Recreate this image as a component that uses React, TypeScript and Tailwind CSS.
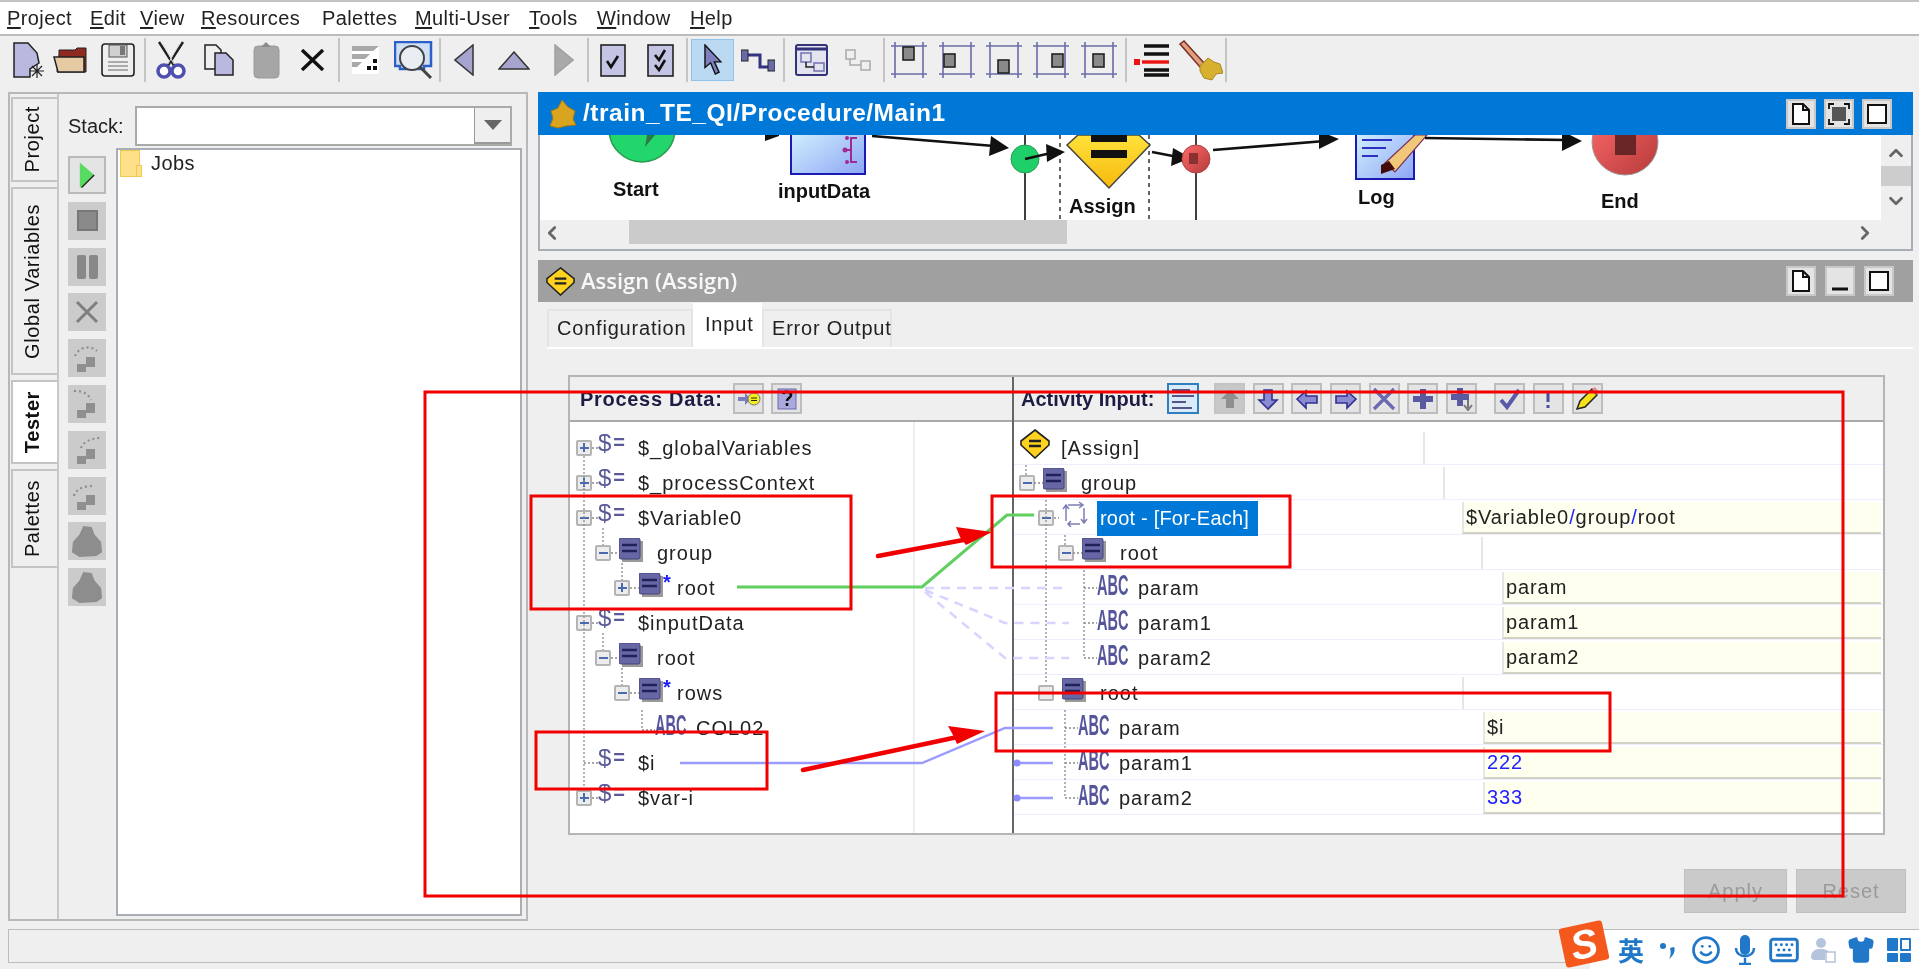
import type { ReactNode } from "react";
import { ChevronDown, ChevronLeft, ChevronRight, ChevronUp, Keyboard, Shirt, Smile } from "lucide-react";

const menus = [
  { hot: "P", rest: "roject", cls: "w-[83px]" },
  { hot: "E", rest: "dit", cls: "w-[50px]" },
  { hot: "V", rest: "iew", cls: "w-[61px]" },
  { hot: "R", rest: "esources", cls: "w-[121px]" },
  { hot: "", rest: "Palettes", cls: "w-[93px]" },
  { hot: "M", rest: "ulti-User", cls: "w-[114px]" },
  { hot: "T", rest: "ools", cls: "w-[68px]" },
  { hot: "W", rest: "indow", cls: "w-[93px]" },
  { hot: "H", rest: "elp", cls: "w-[50px]" },
];

const Sep = ({ cls }: { cls: string }) => <div className={`h-[44px] w-[2px] bg-[#c4c4c4] ${cls}`} />;

const AlignIcon = ({ x, y, cls }: { x: number; y: number; cls: string }) => (
  <svg viewBox="0 0 36 36" className={`h-[36px] w-[36px] ${cls}`}>
    <path d="M0 4h36M0 32h36M4 0v36M32 0v36" stroke="#6c6ca8" strokeWidth="1.6" fill="none" />
    <rect x={x} y={y} width="11" height="13" fill="#8a8a8a" stroke="#222" strokeWidth="1.6" />
  </svg>
);

const Toolbar = () => (
  <div className="flex h-[57px] items-center pb-[9px]">
    <svg viewBox="0 0 33 37" className="ml-[12px] h-[37px] w-[33px]">
      <path d="M2 1h14l9 10 2 10-9 6v8H2z" fill="#b9b9e0" stroke="#222" strokeWidth="1.5" />
      <path d="M25 22v14M18 29h14M20 24l10 10M30 24L20 34" stroke="#222" strokeWidth="1.2" />
    </svg>
    <svg viewBox="0 0 35 26" className="ml-[8px] h-[26px] w-[35px]">
      <path d="M6 7V3h16l2-2h9v24H4z" fill="#8f2a20" stroke="#222" strokeWidth="1" />
      <path d="M1 10h30v15H5z" fill="#e6caa4" stroke="#222" strokeWidth="1.5" />
    </svg>
    <svg viewBox="0 0 34 34" className="ml-[13px] h-[34px] w-[34px]">
      <rect x="1" y="1" width="32" height="32" rx="3" fill="#efefef" stroke="#222" strokeWidth="1.6" />
      <rect x="8" y="2" width="18" height="12" fill="#d0d0d0" stroke="#555" />
      <rect x="19" y="3" width="5" height="9" fill="#777" />
      <path d="M7 19h20M7 23h20M7 27h20" stroke="#666" />
    </svg>
    <Sep cls="ml-[9px]" />
    <svg viewBox="0 0 30 38" className="ml-[10px] h-[38px] w-[30px]">
      <path d="M3 1l16 25M27 1L11 26" stroke="#222" strokeWidth="2.4" />
      <path d="M7 3l11 20M23 3L12 23" stroke="#ddd" strokeWidth="1" />
      <circle cx="8" cy="30" r="6" fill="#fff" stroke="#4f4fb0" strokeWidth="3.5" />
      <circle cx="22" cy="30" r="6" fill="#fff" stroke="#4f4fb0" strokeWidth="3.5" />
    </svg>
    <svg viewBox="0 0 31 32" className="ml-[18px] h-[32px] w-[31px]">
      <path d="M1 1h11l5 5v19H1z" fill="#efefef" stroke="#222" strokeWidth="1.5" />
      <path d="M11 9h11l7 7v15H11z" fill="#b9b9e0" stroke="#222" strokeWidth="1.5" />
    </svg>
    <svg viewBox="0 0 27 38" className="ml-[18px] h-[38px] w-[27px]">
      <rect x="1" y="5" width="25" height="32" rx="4" fill="#a6a6a6" stroke="#9a9a9a" />
      <path d="M8 6l5-5 5 5z" fill="#8a8a8a" />
    </svg>
    <svg viewBox="0 0 25 22" className="ml-[20px] h-[22px] w-[25px]">
      <path d="M2 1l21 20M23 1L2 21" stroke="#111" strokeWidth="3.4" />
    </svg>
    <Sep cls="ml-[13px]" />
    <svg viewBox="0 0 27 28" className="ml-[12px] h-[28px] w-[27px]">
      <rect width="27" height="28" fill="#fff" />
      <path d="M0 0h27l-6 5H0zM0 8h18l-5 5H0zM0 16h10l-5 5H0z" fill="#a8a8a8" />
      <path d="M15 20h4v4h-4zM21 20h4v4h-4zM21 13h4v4h-4z" fill="#111" />
    </svg>
    <svg viewBox="0 0 39 38" className="ml-[15px] h-[38px] w-[39px]">
      <path d="M1 1h36v24H30v3H6v-3H1z" fill="#cfe0f4" stroke="#2c60c8" strokeWidth="2.5" />
      <circle cx="18" cy="17" r="12" fill="#e8eef2" stroke="#444" strokeWidth="2" />
      <path d="M26 26l11 11" stroke="#444" strokeWidth="3" />
    </svg>
    <Sep cls="ml-[6px]" />
    <svg viewBox="0 0 20 32" className="ml-[13px] h-[32px] w-[20px]"><path d="M19 1v30L1 16z" fill="#a7a4cf" stroke="#333" strokeWidth="1.5" /></svg>
    <svg viewBox="0 0 32 19" className="ml-[24px] h-[19px] w-[32px]"><path d="M16 1l15 17H1z" fill="#a7a4cf" stroke="#333" strokeWidth="1.5" /></svg>
    <svg viewBox="0 0 20 32" className="ml-[24px] h-[32px] w-[20px]"><path d="M1 1v30l18-15z" fill="#a9a9a9" stroke="#a0a0a0" strokeWidth="1.5" /></svg>
    <Sep cls="ml-[13px]" />
    <svg viewBox="0 0 26 33" className="ml-[11px] h-[33px] w-[26px]">
      <rect x="1" y="1" width="24" height="31" fill="#c4c4e4" stroke="#222" strokeWidth="1.6" />
      <path d="M7 17l4 6 7-11" stroke="#111" strokeWidth="2.6" fill="none" />
    </svg>
    <svg viewBox="0 0 27 33" className="ml-[21px] h-[33px] w-[27px]">
      <rect x="1" y="1" width="25" height="31" fill="#c4c4e4" stroke="#222" strokeWidth="1.6" />
      <path d="M8 11l4 5 6-10M8 21l4 5 6-10" stroke="#111" strokeWidth="2.6" fill="none" />
    </svg>
    <Sep cls="ml-[12px]" />
    <div className="ml-[3px] flex h-[42px] w-[43px] items-center justify-center border border-[#8fc4ef] bg-[#bcd9f2]">
      <svg viewBox="0 0 20 34" className="h-[32px] w-[19px]"><path d="M2 1v24l6-5 5 12 4-2-5-11h7z" fill="#7f7fc0" stroke="#111" strokeWidth="1.5" /></svg>
    </div>
    <svg viewBox="0 0 34 23" className="ml-[7px] h-[23px] w-[34px]">
      <path d="M6 6h13v12h9" stroke="#333380" strokeWidth="3" fill="none" />
      <rect x="0" y="1" width="7" height="11" fill="#6a6aa8" stroke="#222" />
      <rect x="27" y="11" width="7" height="11" fill="#6a6aa8" stroke="#222" />
    </svg>
    <Sep cls="ml-[8px]" />
    <svg viewBox="0 0 33 32" className="ml-[10px] h-[32px] w-[33px]">
      <rect x="1" y="1" width="31" height="30" rx="2" fill="#e4e4f0" stroke="#33337a" strokeWidth="2" />
      <path d="M1 5h31" stroke="#33337a" strokeWidth="3" />
      <rect x="6" y="9" width="10" height="9" fill="none" stroke="#7070b0" strokeWidth="1.5" />
      <rect x="19" y="19" width="10" height="8" fill="none" stroke="#7070b0" strokeWidth="1.5" />
      <path d="M11 18v5h8" stroke="#222" strokeWidth="1.5" fill="none" />
    </svg>
    <svg viewBox="0 0 26 22" className="ml-[17px] h-[22px] w-[26px]">
      <rect x="1" y="1" width="9" height="9" fill="none" stroke="#aaa" strokeWidth="1.5" />
      <rect x="16" y="12" width="9" height="9" fill="none" stroke="#aaa" strokeWidth="1.5" />
      <path d="M5 10v6h11" stroke="#aaa" strokeWidth="1.5" fill="none" />
    </svg>
    <Sep cls="ml-[12px]" />
    <AlignIcon x={12} y={5} cls="ml-[6px]" />
    <AlignIcon x={5} y={12} cls="ml-[12px]" />
    <AlignIcon x={12} y={18} cls="ml-[11px]" />
    <AlignIcon x={19} y={12} cls="ml-[11px]" />
    <AlignIcon x={12} y={12} cls="ml-[12px]" />
    <Sep cls="ml-[8px]" />
    <svg viewBox="0 0 35 33" className="ml-[7px] h-[33px] w-[35px]">
      <path d="M10 2h25M10 10h25M10 26h25M10 31h25" stroke="#111" strokeWidth="3.4" />
      <path d="M8 18h27" stroke="#ee1111" strokeWidth="3.4" />
      <rect x="0" y="15" width="6" height="6" fill="#ee1111" />
    </svg>
    <svg viewBox="0 0 45 41" className="ml-[9px] h-[41px] w-[45px]">
      <path d="M2 4l4-3 20 22-4 4z" fill="#e0a080" stroke="#7a3020" strokeWidth="1.5" />
      <path d="M22 26l8-8 6 4 6 2 3 9-7 1-4 6-8-2-4-7z" fill="#d8b030" stroke="#a88820" />
    </svg>
    <Sep cls="ml-[2px]" />
  </div>
);

const ToolButton = ({ on, children }: { on?: boolean; children: ReactNode }) => (
  <div className={`flex h-[38px] w-[38px] items-center justify-center ${on ? "border-2 border-[#b9b9b9] bg-[#e4e4e4]" : "bg-[#cbcbcb]"}`}>
    {children}
  </div>
);

const Step = ({ d }: { d: string }) => (
  <svg viewBox="0 0 32 32" className="h-[32px] w-[32px]">
    <path d="M6 22h9v-7h9v10h-9v5H6z" fill="#8f8f8f" />
    <path d={d} fill="none" stroke="#8a8a8a" strokeWidth="2" strokeDasharray="2 3" />
  </svg>
);

const Blob = () => (
  <svg viewBox="0 0 34 36" className="h-[34px] w-[32px]">
    <path d="M13 2l9 1 3 8 7 8 1 11-6 4-18 1-8-5 1-11 7-8z" fill="#8d8d8d" />
  </svg>
);

const LeftPanel = () => (
  <aside className="flex h-[829px] w-[520px] border-2 border-[#b8b8b8]">
    <div className="flex w-[47px] flex-col gap-[5px] pl-[1px] pt-[3px] text-[20px] text-[#111]">
      {[
        { t: "Project", c: "h-[85px]" },
        { t: "Global Variables", c: "h-[188px]" },
        { t: "Tester", c: "h-[84px] bg-white font-bold" },
        { t: "Palettes", c: "h-[99px]" },
      ].map((tab) => (
        <div key={tab.t} className={`flex w-[46px] items-center justify-center border-2 border-r-0 border-[#c4c4c4] pr-[7px] ${tab.c}`}>
          <span className="rotate-180 [writing-mode:vertical-rl] tracking-[0.6px]">{tab.t}</span>
        </div>
      ))}
    </div>
    <div className="flex flex-1 flex-col border-l-2 border-[#c8c8c8] pt-[12px]">
      <div className="flex h-[40px] items-center">
        <span className="ml-[9px] w-[67px] text-[20px] text-[#222]">Stack:</span>
        <div className="flex h-[40px] w-[377px] justify-end border-2 border-[#aaa] bg-white">
          <div className="flex w-[36px] items-center justify-center border-b-2 border-l border-[#999] bg-[#efefef]">
            <div className="h-0 w-0 border-x-[9px] border-t-[10px] border-x-transparent border-t-[#666]" />
          </div>
        </div>
      </div>
      <div className="mt-[2px] flex flex-1">
        <div className="flex w-[57px] flex-col gap-[7.8px] pl-[9px] pt-[8px]">
          <ToolButton on>
            <svg viewBox="0 0 20 30" className="h-[28px] w-[18px]"><path d="M2 1l16 14L4 29H2z" fill="#59db62" /><path d="M4 29l14-14" stroke="#222" strokeWidth="1.5" /></svg>
          </ToolButton>
          <ToolButton><div className="h-[21px] w-[21px] border-2 border-[#777] bg-[#8a8a8a]" /></ToolButton>
          <ToolButton>
            <div className="flex gap-[3px]"><div className="h-[24px] w-[9px] rounded-[2px] bg-[#888]" /><div className="h-[24px] w-[9px] rounded-[2px] bg-[#888]" /></div>
          </ToolButton>
          <ToolButton><svg viewBox="0 0 24 24" className="h-[24px] w-[24px]"><path d="M2 2l20 20M22 2L2 22" stroke="#7f7f7f" strokeWidth="3" /></svg></ToolButton>
          <ToolButton><Step d="M4 14C7 6 18 2 26 9" /></ToolButton>
          <ToolButton><Step d="M3 3c8 0 14 2 17 9" /></ToolButton>
          <ToolButton><Step d="M10 14C12 8 20 4 30 4" /></ToolButton>
          <ToolButton><Step d="M3 16C5 8 14 6 24 6" /></ToolButton>
          <ToolButton><Blob /></ToolButton>
          <ToolButton><Blob /></ToolButton>
        </div>
        <div className="mb-[2px] h-[768px] w-[406px] border-2 border-[#a9adb5] bg-white">
          <div className="flex h-[30px] items-start pl-[2px]">
            <div className="relative h-[27px] w-[20px] border border-[#f0c850] bg-[#ffe08a]">
              <div className="absolute -right-[3px] bottom-[-1px] h-[12px] w-[6px] border border-[#f0c850] bg-[#ffe08a]" />
            </div>
            <span className="-mt-[2px] ml-[11px] text-[20px] tracking-[0.4px] text-[#222]">Jobs</span>
          </div>
        </div>
      </div>
    </div>
  </aside>
);

const WinButton = ({ kind }: { kind: "doc" | "full" | "max" | "min" }) => (
  <div className="flex h-[30px] w-[30px] items-center justify-center border-2 border-[#c8c8c8] bg-[#e4e4e4]">
    <svg viewBox="0 0 22 22" className="h-[22px] w-[22px]">
      {kind === "doc" && <path d="M3 1h10l6 6v14H3zM13 1v6h6" fill="#fff" stroke="#111" strokeWidth="2" />}
      {kind === "full" && (
        <>
          <rect x="4" y="4" width="14" height="14" fill="#555" />
          <path d="M1 6V1h5M16 1h5v5M21 16v5h-5M6 21H1v-5" fill="none" stroke="#111" strokeWidth="1.8" />
        </>
      )}
      {kind === "max" && <rect x="2" y="2" width="18" height="18" fill="#fff" stroke="#111" strokeWidth="2" />}
      {kind === "min" && <path d="M3 19h16" stroke="#111" strokeWidth="3" />}
    </svg>
  </div>
);

const Diamond = ({ cls }: { cls: string }) => (
  <svg viewBox="0 0 30 30" className={cls}>
    <path d="M15 1l14 11v4L15 29 1 16v-4z" fill="#ffd21f" stroke="#222" strokeWidth="1.6" />
    <path d="M9 12h12M9 17h12" stroke="#222" strokeWidth="2.4" />
  </svg>
);

const Diagram = () => (
  <div className="relative h-[85px] flex-1 overflow-hidden bg-white">
    <svg viewBox="541 135 1341 85" className="absolute inset-0 h-[85px] w-[1341px]">
      <defs>
        <linearGradient id="boxFill" x1="0" y1="0" x2="1" y2="1">
          <stop offset="0" stopColor="#d6f6ff" />
          <stop offset="1" stopColor="#8ea6f4" />
        </linearGradient>
        <linearGradient id="goldFill" x1="0" y1="0" x2="0" y2="1">
          <stop offset="0" stopColor="#ffe23a" />
          <stop offset="1" stopColor="#f6b90e" />
        </linearGradient>
        <linearGradient id="redFill" x1="0" y1="0" x2="1" y2="1">
          <stop offset="0" stopColor="#ff6a6a" />
          <stop offset="1" stopColor="#b53a3a" />
        </linearGradient>
      </defs>
      <circle cx="643" cy="129" r="33" fill="#22d66c" stroke="#2a9a50" strokeWidth="1.5" />
      <path d="M648 135l-2 12 10-12z" fill="#2c7a48" />
      <path d="M766 141l14-5v-1h-14z" fill="#111" />
      <rect x="792" y="125" width="74" height="49" fill="url(#boxFill)" stroke="#1a1ab5" strokeWidth="2" />
      <path d="M847 150h5v-12h6M852 150v12h6" fill="none" stroke="#a02a90" strokeWidth="2" />
      <circle cx="846" cy="150" r="2.5" fill="#a02a90" />
      <circle cx="848" cy="162" r="2" fill="#a02a90" />
      <circle cx="848" cy="138" r="2" fill="#a02a90" />
      <path d="M873 136l122 10" stroke="#111" strokeWidth="2.6" />
      <path d="M1010 148l-20 8 2-20z" fill="#111" />
      <path d="M1026 135v85M1197 135v85" stroke="#111" strokeWidth="1.6" />
      <path d="M1061 135v85M1150 135v85" stroke="#333" strokeWidth="1.5" strokeDasharray="4 4" />
      <circle cx="1026" cy="159" r="14" fill="#1fd06a" stroke="#2a9a50" />
      <path d="M1026 159l26-6" stroke="#111" strokeWidth="2.6" />
      <path d="M1066 152l-18 10-1-18z" fill="#111" />
      <path d="M1079 135h61l11 10-41 43-42-43z" fill="url(#goldFill)" stroke="#444" strokeWidth="1.5" />
      <rect x="1092" y="135" width="36" height="7" fill="#111" />
      <rect x="1092" y="150" width="36" height="8" fill="#111" />
      <path d="M1153 152l26 5" stroke="#111" strokeWidth="2.4" />
      <path d="M1192 158l-20 8 2-18z" fill="#111" />
      <circle cx="1197" cy="159" r="14" fill="url(#redFill)" stroke="#aa4444" />
      <rect x="1190" y="153" width="9" height="11" fill="#8a3030" />
      <path d="M1214 150l112-9" stroke="#111" strokeWidth="2.6" />
      <path d="M1340 139l-20 10v-18z" fill="#111" />
      <rect x="1357" y="125" width="58" height="54" fill="url(#boxFill)" stroke="#1a1ab5" strokeWidth="2" />
      <path d="M1363 140h30M1363 148h24M1363 156h16" stroke="#3030c0" strokeWidth="1.8" />
      <path d="M1386 163l30-28h12l-32 37z" fill="#f0c878" stroke="#7a3060" strokeWidth="1.2" />
      <path d="M1382 165l8-4 6 8-14 5z" fill="#440a0a" />
      <path d="M1426 138l140 2" stroke="#111" strokeWidth="2.6" />
      <path d="M1583 141l-20 10v-20z" fill="#111" />
      <circle cx="1626" cy="142" r="33" fill="url(#redFill)" stroke="#999" />
      <rect x="1616" y="135" width="21" height="20" fill="#6a2626" />
    </svg>
    <span className="absolute left-[73px] top-[39px] text-[20px] font-bold text-[#111]">Start</span>
    <span className="absolute left-[238px] top-[41px] text-[20px] font-bold text-[#111]">inputData</span>
    <span className="absolute left-[529px] top-[56px] text-[20px] font-bold text-[#111]">Assign</span>
    <span className="absolute left-[818px] top-[47px] text-[20px] font-bold text-[#111]">Log</span>
    <span className="absolute left-[1061px] top-[51px] text-[20px] font-bold text-[#111]">End</span>
  </div>
);

const ProcessPanel = () => (
  <div className="h-[159px] w-[1375px] border-x-2 border-b-2 border-[#a9adb5]">
    <div className="-mx-[2px] flex h-[43px] items-center bg-[#0078d7] pl-[10px] pr-[21px]">
      <svg viewBox="0 0 30 30" className="h-[30px] w-[30px]">
        <path d="M14 1l6 7 7 4-2 8 3 6-10 1-8 2-8-2 3-8-2-7 7-3z" fill="#d9a520" stroke="#a37810" />
      </svg>
      <span className="ml-[5px] text-[24.5px] font-bold tracking-[0.5px] text-white">/train_TE_QI/Procedure/Main1</span>
      <div className="ml-auto flex gap-[8px]">
        <WinButton kind="doc" />
        <WinButton kind="full" />
        <WinButton kind="max" />
      </div>
    </div>
    <div className="flex">
      <Diagram />
      <div className="flex h-[85px] w-[30px] flex-col items-center text-[#666]">
        <ChevronUp size={22} strokeWidth={3} className="mt-[7px]" />
        <div className="mt-[2px] h-[20px] w-full bg-[#cdcdcd]" />
        <ChevronDown size={22} strokeWidth={3} className="mt-[4px]" />
      </div>
    </div>
    <div className="flex h-[29px] items-start text-[#666]">
      <ChevronLeft size={22} strokeWidth={3} className="ml-[1px] mt-[2px]" />
      <div className="ml-[66px] h-[24px] w-[438px] bg-[#cbcbcb]" />
      <ChevronRight size={22} strokeWidth={3} className="ml-[787px] mt-[2px]" />
    </div>
  </div>
);

const Toggle = ({ open }: { open: boolean }) => (
  <div className="relative flex h-[16px] w-[16px] shrink-0 items-center justify-center rounded-[2px] border-2 border-[#b4b4b4] bg-[#ececec]">
    <div className="h-[2px] w-[9px] bg-[#4a6ab0]" />
    {!open && <div className="absolute h-[9px] w-[2px] bg-[#4a6ab0]" />}
  </div>
);

const VarIcon = () => (
  <span className="-mt-[9px] flex w-[27px] shrink-0 items-center text-[#5a5a9a]">
    <span className="text-[24px] leading-none">$</span>
    <span className="-mt-[3px] ml-[1px] text-[20px] font-bold leading-none">=</span>
  </span>
);

const DataIcon = () => (
  <svg viewBox="0 0 24 24" className="-mt-[6px] h-[24px] w-[24px] shrink-0">
    <rect x="3" y="3" width="21" height="21" fill="#9a9a9a" />
    <rect x="0" y="0" width="21" height="21" rx="2" fill="#6767a6" stroke="#44447e" />
    <path d="M3 7h15M3 13h15" stroke="#22225a" strokeWidth="2.4" />
  </svg>
);

const AbcIcon = () => (
  <span className="-mt-[6px] block h-[24px] w-[29px] shrink-0">
    <span className="block origin-left scale-x-[.5] whitespace-nowrap text-[29px] font-bold leading-[24px] tracking-normal text-[#55559c]">ABC</span>
  </span>
);

const ForEachIcon = () => (
  <svg viewBox="0 0 26 26" className="-mt-[8px] h-[26px] w-[26px] shrink-0">
    <path d="M6 4h14M17 1l4 3-4 3M22 7v14M19 18l3 4 3-4M18 23H6M9 20l-3 3 3 3M4 20V5M1 8l3-4 3 4" fill="none" stroke="#7d7db4" strokeWidth="1.5" />
  </svg>
);

const Star = () => <span className="-mt-[12px] w-[13px] shrink-0 text-[20px] font-bold leading-none text-[#1a1aff]">*</span>;

type LeftRow = { pad: string; toggle?: boolean; toggleGap?: string; icon: ReactNode; iconGap: string; text: string };

const leftRows: LeftRow[] = [
  { pad: "pl-[6px]", toggle: false, toggleGap: "ml-[6px]", icon: <VarIcon />, iconGap: "ml-[13px]", text: "$_globalVariables" },
  { pad: "pl-[6px]", toggle: false, toggleGap: "ml-[6px]", icon: <VarIcon />, iconGap: "ml-[13px]", text: "$_processContext" },
  { pad: "pl-[6px]", toggle: true, toggleGap: "ml-[6px]", icon: <VarIcon />, iconGap: "ml-[13px]", text: "$Variable0" },
  { pad: "pl-[25px]", toggle: true, toggleGap: "ml-[8px]", icon: <DataIcon />, iconGap: "ml-[14px]", text: "group" },
  { pad: "pl-[44px]", toggle: false, toggleGap: "ml-[9px]", icon: <><DataIcon /><Star /></>, iconGap: "ml-[1px]", text: "root" },
  { pad: "pl-[6px]", toggle: true, toggleGap: "ml-[6px]", icon: <VarIcon />, iconGap: "ml-[13px]", text: "$inputData" },
  { pad: "pl-[25px]", toggle: true, toggleGap: "ml-[8px]", icon: <DataIcon />, iconGap: "ml-[14px]", text: "root" },
  { pad: "pl-[44px]", toggle: true, toggleGap: "ml-[9px]", icon: <><DataIcon /><Star /></>, iconGap: "ml-[1px]", text: "rows" },
  { pad: "pl-[85px]", icon: <AbcIcon />, iconGap: "ml-[12px]", text: "COL02" },
  { pad: "pl-[28px]", icon: <VarIcon />, iconGap: "ml-[13px]", text: "$i" },
  { pad: "pl-[6px]", toggle: false, toggleGap: "ml-[6px]", icon: <VarIcon />, iconGap: "ml-[13px]", text: "$var-i" },
];

type RightRow = {
  pad: string;
  toggle?: boolean;
  icon: ReactNode;
  iconGap: string;
  text: ReactNode;
  sep: string;
  value?: ReactNode;
};

const rightRows: RightRow[] = [
  { pad: "pl-[6px]", icon: <Diamond cls="-mt-[8px] h-[30px] w-[30px]" />, iconGap: "ml-[11px]", text: "[Assign]", sep: "w-[458px]" },
  { pad: "pl-[5px]", toggle: true, icon: <DataIcon />, iconGap: "ml-[14px]", text: "group", sep: "w-[438px]" },
  {
    pad: "pl-[24px]",
    toggle: true,
    icon: <ForEachIcon />,
    iconGap: "ml-[12px]",
    text: <span className="-ml-[3px] flex h-[35px] w-[161px] items-center whitespace-nowrap bg-[#0078d7] pl-[3px] tracking-[0.2px] text-white">root - [For-Each]</span>,
    sep: "w-[419px]",
    value: <>$Variable0<span className="text-[#2222ff]">/</span>group<span className="text-[#2222ff]">/</span>root</>,
  },
  { pad: "pl-[44px]", toggle: true, icon: <DataIcon />, iconGap: "ml-[14px]", text: "root", sep: "w-[400px]" },
  { pad: "pl-[83px]", icon: <AbcIcon />, iconGap: "ml-[12px]", text: "param", sep: "w-[379px]", value: "param" },
  { pad: "pl-[83px]", icon: <AbcIcon />, iconGap: "ml-[12px]", text: "param1", sep: "w-[379px]", value: "param1" },
  { pad: "pl-[83px]", icon: <AbcIcon />, iconGap: "ml-[12px]", text: "param2", sep: "w-[379px]", value: "param2" },
  { pad: "pl-[24px]", toggle: true, icon: <DataIcon />, iconGap: "ml-[14px]", text: "root", sep: "w-[419px]" },
  { pad: "pl-[64px]", icon: <AbcIcon />, iconGap: "ml-[12px]", text: "param", sep: "w-[398px]", value: "$i" },
  { pad: "pl-[64px]", icon: <AbcIcon />, iconGap: "ml-[12px]", text: "param1", sep: "w-[398px]", value: <span className="text-[#2222ff]">222</span> },
  { pad: "pl-[64px]", icon: <AbcIcon />, iconGap: "ml-[12px]", text: "param2", sep: "w-[398px]", value: <span className="text-[#2222ff]">333</span> },
];

const HeadButton = ({ off, children }: { off?: boolean; children: ReactNode }) => (
  <div className={`flex h-[31px] w-[31px] items-center justify-center border-2 ${off ? "border-[#c4c4c4] bg-[#c8c8c8]" : "border-[#bdbdbd] bg-[#e4e4e4]"}`}>
    <svg viewBox="0 0 24 24" className="h-[24px] w-[24px]">{children}</svg>
  </div>
);

const arrowStyle = { fill: "#8a8ad2", stroke: "#2f2f92", strokeWidth: 1.6 };

const Mapper = () => (
  <div className="ml-[30px] mt-[26px] flex h-[460px] w-[1317px] border-2 border-[#b5b5b5] text-[20px] tracking-[1px] text-[#222]">
    <div className="w-[442px]">
      <div className="flex h-[45px] items-center border-b-2 border-[#aaa] pl-[10px]">
        <span className="w-[153px] font-bold tracking-[0.7px] text-[#1c1c44]">Process Data:</span>
        <HeadButton>
          <path d="M1 10h7V6l6 6-6 6v-4H1z" fill="#7b7bc0" />
          <circle cx="17" cy="12" r="6" fill="#f3ee1c" stroke="#777" />
          <path d="M14 11h6M14 13.5h6" stroke="#222" />
        </HeadButton>
        <div className="w-[7px]" />
        <HeadButton>
          <rect x="3" y="2" width="18" height="20" fill="#a9a9e0" stroke="#6a6ab0" />
          <path d="M8 7c1-3 8-3 8 1 0 3-4 3-4 6M12 16v3" fill="none" stroke="#111" strokeWidth="2.6" />
        </HeadButton>
      </div>
      <div className="flex h-[411px]">
        <div className="h-full w-[345px] border-r-2 border-[#eeeeee] bg-white pt-[8px]">
          {leftRows.map((r, i) => (
            <div key={i} className={`flex h-[35px] items-center ${r.pad}`}>
              {r.toggle !== undefined && <Toggle open={r.toggle} />}
              <div className={`flex items-center ${r.toggleGap ?? ""}`}>{r.icon}</div>
              <span className={r.iconGap}>{r.text}</span>
            </div>
          ))}
        </div>
        <div className="flex-1 bg-white" />
      </div>
    </div>
    <div className="w-[2px] bg-[#666]" />
    <div className="flex-1">
      <div className="flex h-[45px] items-center border-b-2 border-[#aaa] pl-[7px]">
        <span className="w-[146px] font-bold tracking-[0px] text-[#1c1c44]">Activity Input:</span>
        <div className="flex h-[31px] w-[32px] flex-col justify-center gap-[4px] border-2 border-[#2f7fc0] bg-[#d9ebf8] px-[3px]">
          <div className="h-[2px] w-[18px] bg-[#55558a]" />
          <div className="h-[2px] w-[22px] bg-[#55558a]" />
          <div className="h-[2px] w-[14px] bg-[#55558a]" />
          <div className="h-[2px] w-[20px] bg-[#55558a]" />
        </div>
        <div className="ml-[15px] flex gap-[7.7px]">
          <HeadButton off><path d="M12 3l9 9h-5v9H8v-9H3z" fill="#8f8f8f" /></HeadButton>
          <HeadButton><path d="M12 22l-9-9h5V3h8v10h5z" {...arrowStyle} /></HeadButton>
          <HeadButton><path d="M2 12l9-8v5h11v7H11v5z" {...arrowStyle} /></HeadButton>
          <HeadButton><path d="M22 12l-9-8v5H2v7h11v5z" {...arrowStyle} /></HeadButton>
          <HeadButton><path d="M2 2l20 20M22 2L2 22" stroke="#6a6ab0" strokeWidth="3.4" /></HeadButton>
          <HeadButton><path d="M9 2h6v7h7v6h-7v7H9v-7H2V9h7z" fill="#5a5aa0" /></HeadButton>
          <HeadButton>
            <path d="M7 1h6v6h6v6h-6v6H7v-6H1V7h6z" fill="#5a5aa0" />
            <path d="M18 13v8M14 18l4 5 4-5" stroke="#777" strokeWidth="2" fill="none" />
          </HeadButton>
        </div>
        <div className="ml-[17px] flex gap-[7.7px]">
          <HeadButton><path d="M3 13l6 7L21 3" fill="none" stroke="#5a5aa8" strokeWidth="4" /></HeadButton>
          <HeadButton><path d="M12 4v11M12 18v3" stroke="#4a4aa0" strokeWidth="3" /></HeadButton>
          <HeadButton>
            <path d="M2 22l3-8L17 2l5 6-12 12z" fill="#f6e21a" stroke="#222" strokeWidth="1.5" />
            <path d="M17 2l5 6 2-3-4-5z" fill="#e88" />
          </HeadButton>
        </div>
      </div>
      <div className="h-[411px] bg-white pt-[8px]">
        {rightRows.map((r, i) => (
          <div key={i} className={`flex h-[35px] items-center border-b border-[#eeeeff] pt-[2px] ${r.pad}`}>
            {r.toggle && <Toggle open />}
            <div className={r.toggle ? "ml-[8px] flex items-center" : "flex items-center"}>{r.icon}</div>
            <span className={r.iconGap}>{r.text}</span>
            <div className={`ml-auto mr-[2px] flex h-[32px] items-center border-l-2 border-[#e6e6e6] pl-[2px] ${r.sep} ${r.value ? "border-b-2 border-b-[#d2d2c2] bg-[#fffff0]" : ""}`}>
              <span className="tracking-[0.9px]">{r.value}</span>
            </div>
          </div>
        ))}
      </div>
    </div>
  </div>
);

const AssignPanel = () => (
  <div className="mt-[9px] w-[1375px]">
    <div className="flex h-[42px] items-center bg-[#a0a0a0] pl-[8px] pr-[19px]">
      <Diamond cls="h-[29px] w-[29px]" />
      <span className="ml-[6px] -mt-[1px] font-['Open_Sans',sans-serif] text-[22px] font-semibold text-[#f8f8f8]">Assign (Assign)</span>
      <div className="ml-auto flex gap-[9px]">
        <WinButton kind="doc" />
        <WinButton kind="min" />
        <WinButton kind="max" />
      </div>
    </div>
    <div className="ml-[9px] flex h-[47px] items-end border-b-2 border-white text-[20px] tracking-[0.8px] text-[#222]">
      <div className="flex h-[38px] w-[146px] items-center whitespace-nowrap border-x-2 border-t-2 border-[#e4e4e4] pb-[2px] pl-[8px]">Configuration</div>
      <div className="flex h-[44px] w-[69px] items-center bg-white pb-[3px] pl-[12px]">Input</div>
      <div className="flex h-[38px] w-[130px] items-center whitespace-nowrap border-x-2 border-t-2 border-[#e4e4e4] pb-[2px] pl-[8px]">Error Output</div>
    </div>
    <Mapper />
    <div className="mr-[7px] mt-[34px] flex justify-end gap-[9px] text-[20px] tracking-[1px] text-[#9a9a9a]">
      <div className="flex h-[44px] w-[103px] items-center justify-center border border-[#c0c0c0] bg-[#cacaca]">Apply</div>
      <div className="flex h-[44px] w-[110px] items-center justify-center border border-[#c0c0c0] bg-[#cacaca]">Reset</div>
    </div>
  </div>
);

const Annotations = () => (
  <svg viewBox="0 0 1919 969" className="pointer-events-none absolute inset-0 h-[969px] w-[1919px]">
    {/* tree guide lines */}
    <path
      d="M584 456v334M592 448h6M592 483h6M592 518h6M592 623h6M592 798h6M584 763h14M603 528v17M611 553h8M603 633v17M611 658h8M622 563v17M630 588h9M622 668v17M630 693h9M642 710v20h13M1026 465v10M1034 483h9M1046 500v183M1054 518h5M1065 535v10M1073 553h9M1084 570v88h13M1084 588h13M1084 623h13M1065 710v88h13M1065 728h13M1065 763h13"
      fill="none"
      stroke="#8a8a8a"
      strokeWidth="1.3"
      strokeDasharray="2 2"
    />
    {/* mapping lines */}
    <path d="M925 588h144M925 590l80 33h64M925 592l80 66h64" fill="none" stroke="#d5d5ff" strokeWidth="2.6" strokeDasharray="9 7" />
    <path d="M737 587h185l85-72h27" fill="none" stroke="#5fcf5f" strokeWidth="3" />
    <path d="M680 763h242l83-35h48M1017 763h36M1017 798h36" fill="none" stroke="#9a9aff" strokeWidth="2.4" />
    <circle cx="1017" cy="763" r="3.5" fill="#8c8cff" />
    <circle cx="1017" cy="798" r="3.5" fill="#8c8cff" />
    {/* red markup */}
    <g fill="none" stroke="#f00000" strokeWidth="3">
      <rect x="425" y="392" width="1418" height="504" />
      <rect x="531" y="496" width="320" height="113" />
      <rect x="536" y="732" width="231" height="57" />
      <rect x="992" y="496" width="298" height="71" />
      <rect x="996" y="693" width="614" height="58" />
    </g>
    <path d="M878 556l96-18" stroke="#f00000" strokeWidth="4.5" strokeLinecap="round" />
    <path d="M992 532l-26 13-6-8-4-10z" fill="#f00000" />
    <path d="M803 770l164-35" stroke="#f00000" strokeWidth="4.5" strokeLinecap="round" />
    <path d="M985 731l-28 13-4-9-5-9z" fill="#f00000" />
  </svg>
);

const ImeBar = () => (
  <div className="absolute bottom-0 right-0 flex h-[39px] w-[329px] items-center bg-white text-[#2278c8]">
    <div className="absolute -top-[6px] left-[-28px] flex h-[40px] w-[44px] rotate-[-12deg] items-center justify-center rounded-[3px] bg-[#f4581c] font-bold italic leading-none text-white">
      <span className="text-[40px]">S</span>
    </div>
    <span className="ml-[28px] font-['Noto_Sans_CJK_SC',sans-serif] text-[26px] font-bold leading-none">英</span>
    <svg viewBox="0 0 18 20" className="ml-[15px] h-[20px] w-[18px]">
      <circle cx="4" cy="6" r="3" fill="#2278c8" />
      <path d="M15 7c2 4-1 9-5 12 2-4 2-7 1-11z" fill="#2278c8" />
    </svg>
    <Smile size={30} strokeWidth={2.2} className="ml-[14px]" />
    <svg viewBox="0 0 22 30" className="ml-[13px] h-[30px] w-[22px]">
      <rect x="6" y="0" width="10" height="20" rx="5" fill="#2278c8" />
      <path d="M2 13c0 11 18 11 18 0M11 23v5M5 29h12" fill="none" stroke="#2278c8" strokeWidth="2.4" />
    </svg>
    <Keyboard size={32} strokeWidth={2.2} className="ml-[12px]" />
    <svg viewBox="0 0 25 26" className="ml-[11px] h-[26px] w-[25px]">
      <circle cx="10" cy="6" r="5" fill="#b4c4da" />
      <path d="M0 21c0-8 5-9 10-9s8 2 8 4h-4v7H2z" fill="#b4c4da" />
      <rect x="15" y="15" width="9" height="10" fill="#fff" stroke="#b4c4da" strokeWidth="1.5" />
    </svg>
    <Shirt size={28} fill="#2278c8" className="ml-[11px]" />
    <div className="ml-[12px] grid h-[24px] w-[24px] grid-cols-2 gap-[2px]">
      <div className="rounded-[1px] bg-[#2278c8]" />
      <div className="rounded-[1px] border-2 border-[#2278c8]" />
      <div className="rounded-[1px] bg-[#2278c8]" />
      <div className="rounded-[1px] bg-[#2278c8]" />
    </div>
  </div>
);

export default function App() {
  return (
    <div className="relative h-[969px] w-[1919px] overflow-hidden bg-[#efefef] font-['Liberation_Sans',Arial,sans-serif] blur-[0.5px]">
      <div className="flex h-[36px] items-center border-y-2 border-b-2 border-t-[#c4c4c4] border-b-[#bcbcbc] bg-white pl-[7px] text-[20px] tracking-[0.4px] text-[#222]">
        {menus.map((m) => (
          <span key={m.rest} className={m.cls}>
            <span className="underline underline-offset-2">{m.hot}</span>
            {m.rest}
          </span>
        ))}
      </div>
      <Toolbar />
      <div className="mt-[-1px] flex pl-[8px]">
        <LeftPanel />
        <div className="ml-[10px]">
          <ProcessPanel />
          <AssignPanel />
        </div>
      </div>
      <div className="ml-[8px] mt-[8px] h-[34px] border border-[#bcbcbc]" />
      <ImeBar />
      <Annotations />
    </div>
  );
}
